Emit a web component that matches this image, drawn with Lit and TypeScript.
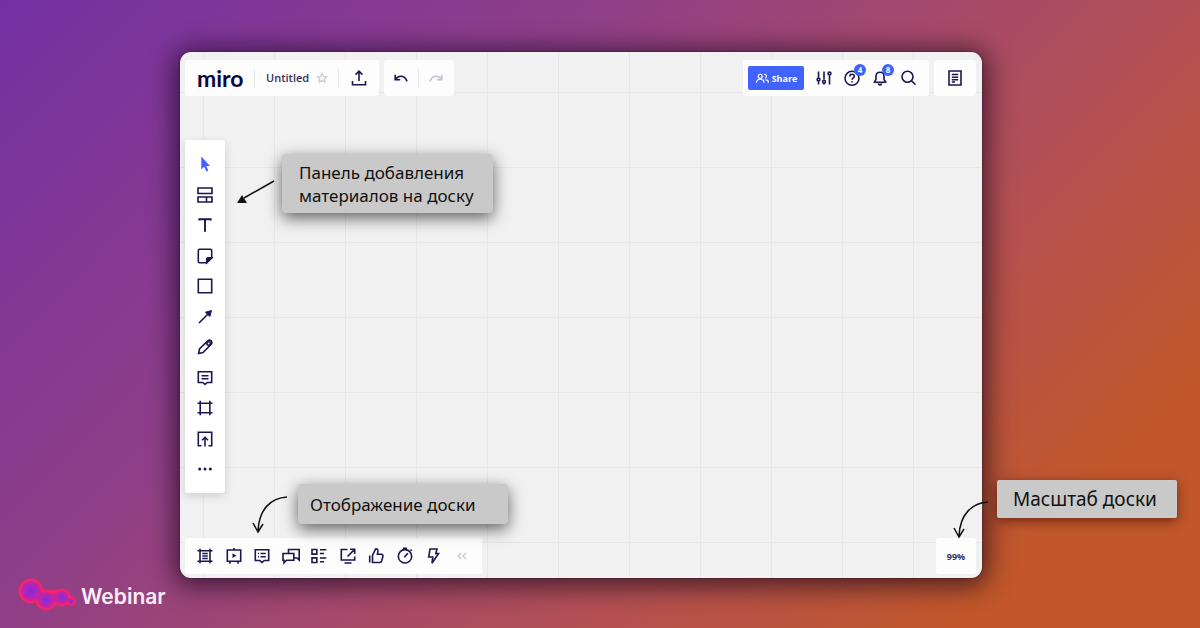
import { LitElement, html, css, svg, type SVGTemplateResult } from "lit";
import { customElement } from "lit/decorators.js";

type Item = { label: string; icon: SVGTemplateResult };

const icons = {
  upload: svg`<path d="M10 13V3.600M6.600 6.600 10 3.200l3.400 3.400M3.500 13v3.800h13V13"/>`,
  undo: svg`<path d="M4.200 6.700v5h5M4.600 11.200C7.500 7.200 13.500 6.600 16 13.400"/>`,
  redo: svg`<path d="M15.800 6.700v5h-5M15.400 11.200C12.500 7.200 6.500 6.600 4 13.400"/>`,
  star: svg`<path d="m10 3.500 1.900 4.300 4.600.5-3.400 3.100.9 4.600-4-2.400-4 2.400.9-4.600L3.500 8.300l4.600-.5z"/>`,
  people: svg`<circle cx="7" cy="7" r="2.700"/><path d="M2 15.500c0-6 10-6 10 0M11.800 4.400a2.700 2.700 0 1 1 1.400 5.300M14 11.500c2.600.3 4 1.700 4 4"/>`,
  sliders: svg`<path d="M4.500 3.500v6M4.500 13.500v3M10 3.500v8M10 15.500v1M15.500 7.500v9"/><circle cx="4.500" cy="11.500" r="1.400"/><circle cx="10" cy="13.700" r="1.400"/><circle cx="15.500" cy="5.500" r="1.400"/>`,
  help: svg`<circle cx="10" cy="10.300" r="7"/><path d="M7.800 8.500c0-3 4.500-3 4.500-.3 0 1.700-2.200 1.700-2.200 3.600M10.100 13.200v1.300"/>`,
  bell: svg`<path d="M3.500 14.300h13M5 14V13l1-1.500V8.300c0-5.400 8-5.400 8 0v3.200l1 1.500v1M8.300 15.500c.3 1.800 3.100 1.800 3.400 0"/>`,
  search: svg`<circle cx="9.500" cy="8.700" r="5.500"/><path d="m13.500 12.700 4 4"/>`,
  notes: svg`<path d="M4 3h12v14H4zM6.800 6.500h6.400M6.800 9.200h6.400M6.800 11.700h6.400M6.800 14h3.200"/>`,
  cursor: svg`<path fill="currentColor" stroke="none" d="M6.300 2.500v13l3-2.700 2 4.700 2-.9-2-4.500h3.700z"/>`,
  templates: svg`<path d="M3 3h14v5.500H3zM3 12h14v5H3zM11.500 12v5"/>`,
  text: svg`<path stroke-width="1.900" d="M4.300 5.500V4.200h11.400v1.300M10 4.200v12.500"/>`,
  sticky: svg`<path d="M4.500 3.200h11q1.200 0 1.200 1.200v7.400l-5 5H4.500q-1.200 0-1.200-1.200V4.400q0-1.200 1.200-1.200z"/><path fill="currentColor" d="M16.700 11.800h-3.800q-1.200 0-1.200 1.200v3.800z"/>`,
  shape: svg`<path d="M3.300 3.300h13.400v13.400H3.300z"/>`,
  line: svg`<path d="M4 16 13.500 6.500"/><path fill="currentColor" stroke-width="1" d="m16.500 3.500-1.700 6-4.300-4.300z"/>`,
  pen: svg`<path d="m3.600 16.500.9-4.700 8.300-8q1.900-1.400 3.400.1 1.400 1.600 0 3.400l-8.200 8.200z"/><circle cx="13.600" cy="6.500" r="1.700"/>`,
  comment: svg`<path d="M3.300 3.800h13.400v10.700h-4.500L10 16.500l-2.200-2H3.300zM6.500 7.700h7M6.500 10.700h7"/>`,
  frame: svg`<path d="M5.200 2.800v14.400M14.800 2.800v14.400M2.500 5.200h15M2.500 14.800h15"/>`,
  insert: svg`<path d="M6.500 16.700H3.300V3.300h13.400v13.400h-3.200M10 17.500V8.500M7 11.300l3-3 3 3"/>`,
  more: svg`<g fill="currentColor" stroke="none"><circle cx="4.700" cy="10" r="1.500"/><circle cx="10" cy="10" r="1.500"/><circle cx="15.300" cy="10" r="1.500"/></g>`,
  frames: svg`<path d="M5 2.700v14.600M15 2.700v14.600M2.500 4.700h15M2.500 15.300h15M7.300 7.500h5.500M7.300 10h5.500M7.300 12.500h5.500"/>`,
  present: svg`<path d="M3.300 4h13.400v11.300H3.300zM10 2v2M6.500 15.500l-1 2.300M13.500 15.500l1 2.300"/><path fill="currentColor" stroke="none" d="m8.500 7.300 4 2.400-4 2.400z"/>`,
  comments: svg`<path d="M3.300 3.800h13.400v10.700h-4.500L10 16.500l-2.200-2H3.300zM8.500 7.500h5.300M8.500 10.700h5.300M6 7.500h1M6 10.700h1"/>`,
  chat: svg`<path d="M7.500 7.200V3.500h10.700V14l-2-2h-3M2 7.500h10.800v6.800H5.500L3 16.800v-2.500H2z"/>`,
  cards: svg`<path d="M3 3.500h4.800v4.600H3zM3 11.900h4.800v4.600H3zM11 3.700h6.300M11 7.500h4M11 12h6.300M11 15.700h4"/>`,
  screen: svg`<path d="M9.500 3.500H3.300V14h13.400v-3.500M6.500 17h7M9.500 10.500l7-7M12 3.300h4.700V8"/>`,
  thumb: svg`<path d="M6.500 9.300 9.600 3c2-.4 2.600.8 2.300 2.500l-.5 2.700h3.800c1.500 0 2 1 1.700 2.200l-1.200 4.600c-.3 1-1 1.500-2 1.500H6.500zM3.700 9.500v7"/>`,
  timer: svg`<circle cx="10" cy="10.300" r="6.700"/><path d="m9.300 11.200 3.600-4M8 2.300h4M15.500 3.500l1.200 1.200"/>`,
  bolt: svg`<path d="M7 3h7l-1.200 4.500h2.700L9 17.200l.8-6.200H5.700z"/>`,
  collapse: svg`<path stroke-width="1.300" d="M9 7 6 10l3 3M14 7l-3 3 3 3"/>`,
};

const icon = (shape: SVGTemplateResult) =>
  html`<svg class="icon" viewBox="0 0 20 20" aria-hidden="true">${shape}</svg>`;

const TOOLS: Item[] = [
  { label: "Select", icon: icons.cursor },
  { label: "Templates", icon: icons.templates },
  { label: "Text", icon: icons.text },
  { label: "Sticky note", icon: icons.sticky },
  { label: "Shape", icon: icons.shape },
  { label: "Connection line", icon: icons.line },
  { label: "Pen", icon: icons.pen },
  { label: "Comment", icon: icons.comment },
  { label: "Frame", icon: icons.frame },
  { label: "Upload", icon: icons.insert },
  { label: "More", icon: icons.more },
];

const VIEWS: Item[] = [
  { label: "Frames", icon: icons.frames },
  { label: "Presentation", icon: icons.present },
  { label: "Comments", icon: icons.comments },
  { label: "Chat", icon: icons.chat },
  { label: "Cards", icon: icons.cards },
  { label: "Screen sharing", icon: icons.screen },
  { label: "Voting", icon: icons.thumb },
  { label: "Timer", icon: icons.timer },
  { label: "Activities", icon: icons.bolt },
];

@customElement("app-root")
export class AppRoot extends LitElement {
  static styles = css`
    :host {
      display: flex;
      flex-direction: column;
      box-sizing: border-box;
      min-height: 100vh;
      padding-top: 52px;
      overflow: hidden;
      color: #1a1750;
      font-family: "Open Sans", "Noto Sans", sans-serif;
      background: linear-gradient(135deg, #7430a3 0%, #903f87 34%, #a3486f 50%, #b45052 67%, #c1572b 86%, #c1572b 100%);
    }
    * { box-sizing: border-box; }
    .board {
      position: relative;
      flex: 1;
      display: flex;
      flex-direction: column;
      margin: 0 218px 0 180px;
      padding: 8px 6px 4px 5px;
      border-radius: 11px;
      background-color: #f1f1f1;
      background-image:
        linear-gradient(90deg, #e7e7e8 1px, transparent 1px),
        linear-gradient(#e7e7e8 1px, transparent 1px);
      background-size: 71px 75px;
      background-position: 23px 40px;
      box-shadow: 0 0 2px rgba(20, 10, 40, 0.6), 0 3px 26px 5px rgba(10, 0, 20, 0.65);
    }
    .bar { display: flex; gap: 5px; }
    .bottom { justify-content: space-between; }
    .spacer { flex: 1; }
    .panel {
      display: flex;
      align-items: center;
      height: 36px;
      border-radius: 3px;
      background: #fdfdfd;
    }
    .title { padding: 0 10px 0 12px; }
    .history { padding: 0 8px 0 7px; gap: 7px; }
    .actions { padding: 0 11px 0 5px; gap: 8px; }
    .notes { padding: 0 11px; }
    .views { width: 297px; padding: 0 10px; justify-content: space-between; }
    .zoom { width: 40px; justify-content: center; }
    .brand { width: 57px; color: #0b0840; font: 700 23px/28px Lato, sans-serif; }
    .divider { width: 1px; height: 19px; background: #e6e6ea; }
    .name { margin-left: 11px; color: #34315f; font-size: 11px; font-weight: 600; line-height: 16px; }
    .faint { color: #c4c3d0; }
    .gap { margin-left: 10px; }
    button {
      position: relative;
      display: flex;
      align-items: center;
      justify-content: center;
      flex: none;
      margin: 0;
      padding: 0;
      border: 0;
      color: inherit;
      background: none;
      font: inherit;
      cursor: pointer;
    }
    .icon {
      display: block;
      width: 20px;
      height: 20px;
      fill: none;
      stroke: currentColor;
      stroke-width: 1.6;
    }
    .small { margin: 0 9px 0 6px; }
    .small .icon { width: 14px; height: 14px; }
    .share {
      width: 56px;
      height: 24px;
      gap: 2px;
      margin-right: 2px;
      border-radius: 2px;
      color: #fff;
      background: #4262ff;
      font-size: 9px;
      font-weight: 700;
    }
    .share .icon { width: 15px; height: 15px; }
    .badge {
      position: absolute;
      top: -4px;
      right: -4px;
      width: 12px;
      height: 12px;
      border-radius: 50%;
      color: #fff;
      background: #4262ff;
      font-size: 8px;
      font-weight: 700;
      line-height: 12px;
      text-align: center;
    }
    .tools {
      flex: 1;
      display: flex;
      flex-direction: column;
      align-items: center;
      justify-content: space-between;
      width: 40px;
      margin: 44px 0 45px;
      padding: 14px 0;
      border-radius: 3px;
      background: #fff;
      box-shadow: 0 3px 10px rgba(5, 0, 56, 0.14);
    }
    .tools .active { color: #4262ff; }
    .percent { color: #34315f; font-size: 9px; font-weight: 700; }
    .callout { position: absolute; display: flex; align-items: flex-end; pointer-events: none; }
    .add { left: 57px; top: 102px; gap: 7px; }
    .display { left: 72px; bottom: 44px; gap: 10px; }
    .scale { right: -195px; bottom: 39px; gap: 8px; }
    .arrow { flex: none; width: 38px; height: 38px; fill: none; stroke: #111; stroke-width: 1.5; }
    .curve { width: 36px; }
    .label {
      margin: 0;
      border-radius: 4px;
      color: #111;
      background: #c9c9c9;
      font: 17px/23px "Noto Sans", sans-serif;
      white-space: nowrap;
      box-shadow: 0 5px 16px rgba(0, 0, 0, 0.6);
    }
    .add .label { width: 211px; padding: 7px 17px 6px; }
    .display .label { width: 210px; margin-bottom: 10px; padding: 9px 12px 8px; }
    .scale .label {
      width: 180px;
      margin-bottom: 21px;
      padding: 8px 16px 7px;
      border-radius: 2px;
      font-size: 19px;
      box-shadow: 0 3px 12px rgba(60, 10, 0, 0.6);
    }
    .footer { display: flex; align-items: flex-start; height: 50px; padding: 0 18px; gap: 5px; color: #fbeef8; }
    .logo { width: 58px; height: 34px; }
    .webinar { font: 600 21px/38px Inter, sans-serif; }
  `;

  private button(item: Item, extra = "") {
    return html`<button class=${extra} type="button" aria-label=${item.label}>${icon(item.icon)}</button>`;
  }

  private curve() {
    return html`<svg class="arrow curve" viewBox="0 0 36 38" aria-hidden="true">
      <path d="M35 1C19 2 7 13 6 35M1 27l5 9 5-8" />
    </svg>`;
  }

  render() {
    return html`
      <main class="board">
        <header class="bar">
          <div class="panel title">
            <span class="brand">miro</span>
            <span class="divider"></span>
            <span class="name">Untitled</span>
            ${this.button({ label: "Favourite", icon: icons.star }, "small faint")}
            <span class="divider"></span>
            ${this.button({ label: "Export", icon: icons.upload }, "gap")}
          </div>
          <div class="panel history">
            ${this.button({ label: "Undo", icon: icons.undo })}
            <span class="divider"></span>
            ${this.button({ label: "Redo", icon: icons.redo }, "faint")}
          </div>
          <span class="spacer"></span>
          <div class="panel actions">
            <button class="share" type="button">${icon(icons.people)}Share</button>
            ${this.button({ label: "Settings", icon: icons.sliders })}
            <button type="button" aria-label="Help">${icon(icons.help)}<span class="badge">4</span></button>
            <button type="button" aria-label="Notifications">${icon(icons.bell)}<span class="badge">8</span></button>
            ${this.button({ label: "Search", icon: icons.search })}
          </div>
          <div class="panel notes">${this.button({ label: "Notes", icon: icons.notes })}</div>
        </header>

        <nav class="tools" aria-label="Tools">
          ${TOOLS.map((tool, i) => this.button(tool, i === 0 ? "active" : ""))}
        </nav>

        <div class="bar bottom">
          <nav class="panel views" aria-label="Views">
            ${VIEWS.map((view) => this.button(view))}
            ${this.button({ label: "Collapse", icon: icons.collapse }, "faint")}
          </nav>
          <div class="panel zoom"><button class="percent" type="button">99%</button></div>
        </div>

        <div class="callout add">
          <svg class="arrow" viewBox="0 0 38 38" aria-hidden="true">
            <path d="M37 6 7 23" />
            <path fill="#111" stroke="none" d="m0 28 5-8 5 8z" />
          </svg>
          <p class="label">Панель добавления<br />материалов на доску</p>
        </div>
        <div class="callout display">
          ${this.curve()}
          <p class="label">Отображение доски</p>
        </div>
        <div class="callout scale">
          ${this.curve()}
          <p class="label">Масштаб доски</p>
        </div>
      </main>

      <footer class="footer">
        <svg class="logo" viewBox="0 0 58 34" aria-hidden="true">
          <defs>
            <radialGradient id="blob">
              <stop offset="0" stop-color="#7f2be0" />
              <stop offset="0.5" stop-color="#a328c4" />
              <stop offset="1" stop-color="#c4259f" />
            </radialGradient>
          </defs>
          <g fill="#f2246e">
            <circle cx="13" cy="13" r="12.500" />
            <circle cx="28" cy="22" r="10.500" />
            <circle cx="44" cy="19.500" r="9" />
            <circle cx="53" cy="23" r="5" />
            <path fill="none" stroke="#f2246e" stroke-width="15" d="M13 13 28 20l16-1" />
          </g>
          <g fill="#c4259f">
            <circle cx="13" cy="13" r="9.500" />
            <circle cx="28" cy="22" r="7.500" />
            <circle cx="44" cy="19.500" r="6" />
            <circle cx="53" cy="23" r="2.500" />
            <path fill="none" stroke="#c4259f" stroke-width="8" d="M13 13 28 21l16-1" />
            <path fill="none" stroke="#c4259f" stroke-width="4" d="m44 20 9 3" />
          </g>
          <g fill="url(#blob)">
            <circle cx="13" cy="13" r="9.500" />
            <circle cx="28" cy="22" r="7.500" />
            <circle cx="44" cy="19.500" r="6" />
            <circle cx="53" cy="23" r="2.500" />
          </g>
        </svg>
        <span class="webinar">Webinar</span>
      </footer>
    `;
  }
}
